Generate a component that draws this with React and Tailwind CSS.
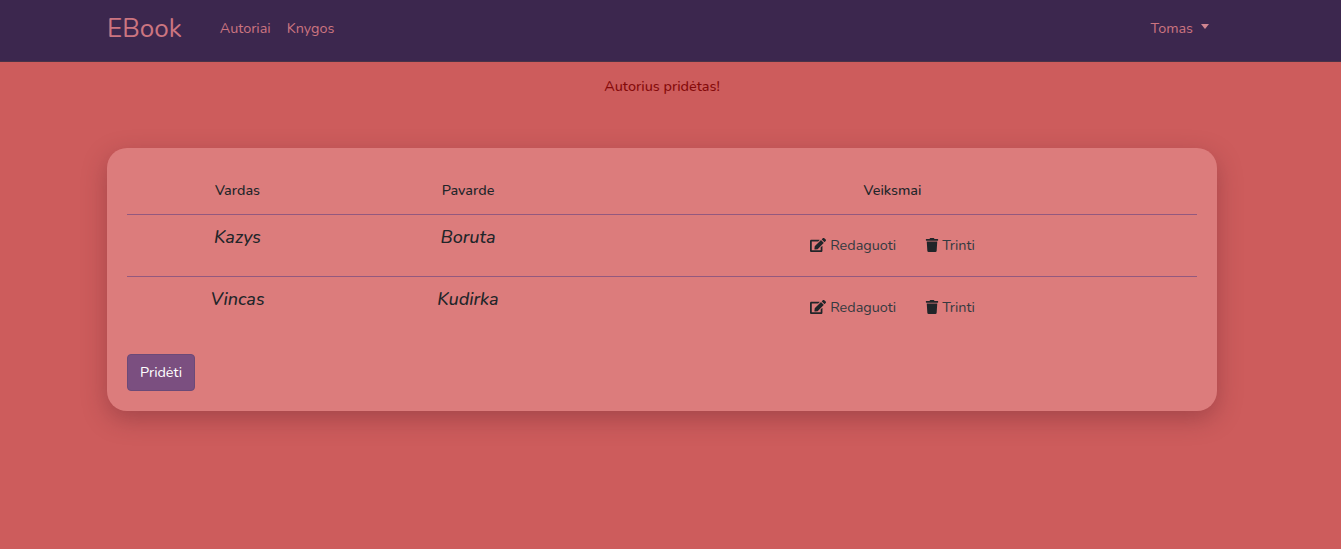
import React from 'react';
import { FaEdit, FaTrash } from 'react-icons/fa';

const authors = [
  { first: 'Kazys', last: 'Boruta' },
  { first: 'Vincas', last: 'Kudirka' },
];

export default function App() {
  return (
    <div className="min-h-[549px] bg-[#cd5c5c] text-[14.4px] text-[#212529] font-['Nunito','Lato','Noto_Sans',sans-serif]">
      {/* Navbar */}
      <nav className="h-[62px] bg-[#3c274e] border-b border-[#4a3347] text-[#cc7580]">
        {/* page was shot with a 17px scrollbar gutter, so content centres on 1324 */}
        <div className="w-[1324px]">
          <div className="mx-auto w-[1110px] h-[57px] flex items-center">
            <a className="text-[26px] mr-[38px]">EBook</a>
            <a className="mr-4">Autoriai</a>
            <a>Knygos</a>
            <div className="ml-auto mr-2 flex items-center gap-2">
              <span>Tomas</span>
              <span className="w-0 h-0 border-x-[4.5px] border-x-transparent border-t-[5px] border-t-[#d08590] mb-1" />
            </div>
          </div>
        </div>
      </nav>

      <div className="w-[1324px]">
        <div className="pt-[14px] h-[39px] box-content text-center text-[#850a0a] font-medium">Autorius pridėtas!</div>

        {/* Card */}
        <div className="mx-auto mt-[33px] w-[1110px] rounded-[20px] bg-[#dc7c7c] p-5 shadow-[0_8px_24px_rgba(90,30,40,0.35)]">
          <table className="w-[1070px] table-fixed">
            <thead>
              <tr className="h-[46px] border-b border-[#93597f] font-medium">
                <th className="w-[221px] font-medium">Vardas</th>
                <th className="w-[240px] font-medium">Pavarde</th>
                <th className="font-medium">Veiksmai</th>
              </tr>
            </thead>
            <tbody>
              {authors.map((a, i) => (
                <tr key={a.first} className={`h-[62px] ${i === 0 ? 'border-b border-[#93597f]' : ''}`}>
                  <td className="text-center align-top pt-[9px] text-[18px] italic font-[550]">{a.first}</td>
                  <td className="text-center align-top pt-[9px] text-[18px] italic font-[550]">{a.last}</td>
                  <td className="align-middle">
                    <div className="flex items-center justify-center gap-[29px] pt-[2px] text-[#343a40]">
                      <span className="flex items-center gap-1"><FaEdit className="text-[#212529] text-[16px] -mt-0.5" />Redaguoti</span>
                      <span className="flex items-center gap-[3px]"><FaTrash className="text-[#212529] text-[14px] -mt-0.5" />Trinti</span>
                    </div>
                  </td>
                </tr>
              ))}
            </tbody>
          </table>
          <button className="mt-[16px] block h-[37px] w-[68px] pt-px rounded border border-[#6b4a78] bg-[#7b4f80] text-white">Pridėti</button>
        </div>
      </div>
    </div>
  );
}
